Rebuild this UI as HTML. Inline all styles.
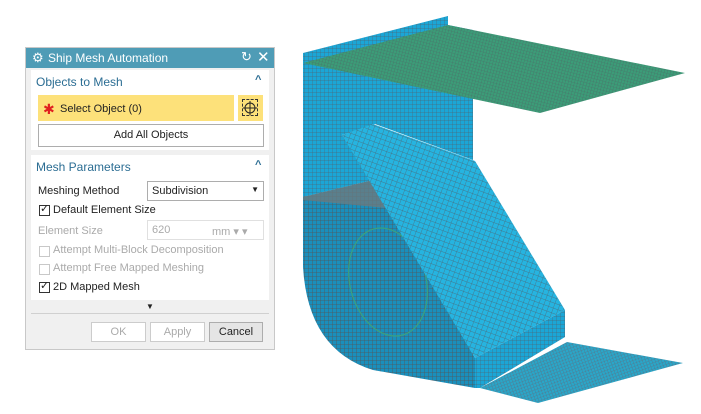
<!DOCTYPE html>
<html><head><style>
body{margin:0;width:701px;height:414px;background:#fff;font-family:"Liberation Sans",sans-serif;font-size:11px;color:#222;position:relative;overflow:hidden}
.a{position:absolute}
.dlg{left:25px;top:47px;width:250px;height:303px;background:#f0f0f0;border:1px solid #c8c8c8;box-sizing:border-box}
.title{left:0;top:0;width:248px;height:20px;background:#4f9cb6;color:#fff;font-size:12px}
.sec{background:#fff;left:5px;width:238px}
.hdr{color:#2b6d93;font-size:12px}
.btn{border:1px solid #adadad;background:#fff;text-align:center;box-sizing:border-box}
.cb{width:11px;height:11px;border:1px solid #333;box-sizing:border-box;background:#fff}
.dis{color:#aaa}
.cb.dis{border-color:#c8c8c8}
</style></head><body>
<div class="a dlg">
 <div class="a title"><span class="a" style="left:6px;top:2px;font-size:13px">⚙</span><span class="a" style="left:22px;top:3px">Ship Mesh Automation</span><span class="a" style="left:215px;top:1px;font-size:13px">↻</span><span class="a" style="left:231px;top:0px;font-size:15px">✕</span></div>
 <div class="a sec" style="top:22px;height:80px">
  <span class="a hdr" style="left:5px;top:5px">Objects to Mesh</span><span class="a" style="left:224px;top:4px;color:#2b6d93;font-weight:bold">^</span>
  <div class="a" style="left:7px;top:25px;width:196px;height:26px;background:#fde17a"></div>
  <span class="a" style="left:12px;top:31px;color:#e02020;font-size:14px">✱</span>
  <span class="a" style="left:29px;top:33px">Select Object (0)</span>
  <div class="a" style="left:207px;top:25px;width:25px;height:26px;background:#fde17a"><div class="a" style="left:4px;top:4px;width:16px;height:17px;border:1px dashed #333;box-sizing:border-box"></div><svg class="a" style="left:4px;top:5px" width="16" height="16"><circle cx="8" cy="8" r="5" fill="none" stroke="#222"/><path d="M8 1V15M1 8H15" stroke="#222"/></svg></div>
  <div class="a btn" style="left:7px;top:54px;width:226px;height:23px;line-height:21px">Add All Objects</div>
 </div>
 <div class="a sec" style="top:107px;height:145px">
  <span class="a hdr" style="left:5px;top:5px">Mesh Parameters</span><span class="a" style="left:224px;top:4px;color:#2b6d93;font-weight:bold">^</span>
  <span class="a" style="left:7px;top:30px">Meshing Method</span>
  <div class="a btn" style="left:116px;top:26px;width:117px;height:20px;text-align:left;padding:3px 4px">Subdivision<span class="a" style="right:4px;top:3px;font-size:8px">▼</span></div>
  <div class="a cb" style="left:8px;top:50px"></div><span class="a" style="left:9px;top:47px;font-size:11px">✓</span><span class="a" style="left:22px;top:49px">Default Element Size</span>
  <span class="a dis" style="left:7px;top:70px">Element Size</span>
  <div class="a" style="left:116px;top:65px;width:117px;height:20px;border:1px solid #e0e0e0;box-sizing:border-box"><span class="a dis" style="left:4px;top:3px">620</span><span class="a dis" style="left:64px;top:4px">mm ▾ ▾</span></div>
  <div class="a cb dis" style="left:8px;top:91px"></div><span class="a dis" style="left:22px;top:89px">Attempt Multi-Block Decomposition</span>
  <div class="a cb dis" style="left:8px;top:109px"></div><span class="a dis" style="left:22px;top:107px">Attempt Free Mapped Meshing</span>
  <div class="a cb" style="left:8px;top:127px"></div><span class="a" style="left:9px;top:124px">✓</span><span class="a" style="left:22px;top:126px">2D Mapped Mesh</span>
 </div>
 <span class="a" style="left:120px;top:254px;font-size:8px">▼</span>
 <div class="a" style="left:5px;top:265px;width:238px;height:1px;background:#d0d0d0"></div>
 <div class="a btn dis" style="left:65px;top:274px;width:55px;height:20px;line-height:18px;border-color:#ccc">OK</div>
 <div class="a btn dis" style="left:124px;top:274px;width:55px;height:20px;line-height:18px;border-color:#ccc">Apply</div>
 <div class="a btn" style="left:183px;top:274px;width:54px;height:20px;line-height:18px;background:#e5e5e5">Cancel</div>
</div>
<svg class="a" style="left:0;top:0" width="701" height="414">
<defs>
<pattern id="c" width="4" height="4" patternUnits="userSpaceOnUse"><rect width="4" height="4" fill="#1ba6d6"/><path d="M0 0H4M0 0V4" stroke="#4a6a7a" stroke-width="0.7"/></pattern>
<pattern id="c2" width="5" height="5" patternUnits="userSpaceOnUse" patternTransform="rotate(20)"><rect width="5" height="5" fill="#26b4e0"/><path d="M0 0H5M0 0V5" stroke="#4a6a7a" stroke-width="0.7"/></pattern>
<pattern id="g" width="3" height="3" patternUnits="userSpaceOnUse" patternTransform="rotate(15)"><rect width="3" height="3" fill="#3c9c78"/><path d="M0 0H3M0 0V3" stroke="#4c6a66" stroke-width="0.6"/></pattern>
<pattern id="d" width="4" height="4" patternUnits="userSpaceOnUse"><rect width="4" height="4" fill="#1a8fbc"/><path d="M0 0H4M0 0V4" stroke="#555" stroke-width="0.8"/></pattern>
<pattern id="f" width="3" height="3" patternUnits="userSpaceOnUse" patternTransform="rotate(-20)"><rect width="3" height="3" fill="#2aa6c8"/><path d="M0 0H3M0 0V3" stroke="#667" stroke-width="0.6"/></pattern>
</defs>
<polygon points="303,53 448,16 448,25 473,30 473,160 375,124 342,135 373,180 303,197" fill="url(#c)"/>
<path d="M303,197 L373,180 L475,358 L475,388 L373,370 Q308,350 303,267 Z" fill="url(#d)"/>
<polygon points="303,197 373,180 386,208 303,200" fill="#6a7a80" opacity="0.8"/>
<ellipse cx="388" cy="282" rx="38" ry="55" transform="rotate(-15 388 282)" fill="none" stroke="#3aa080" stroke-width="1.2"/>
<polygon points="342,135 373,124 475,161 565,310 475,358" fill="url(#c2)"/>
<polygon points="475,358 565,310 565,337 480,388 475,388" fill="url(#c)"/>
<polygon points="480,388 567,342 683,363 538,403" fill="url(#f)"/>
<polygon points="303,63 448,25 685,73 540,113" fill="url(#g)"/>
</svg>
</body></html>
